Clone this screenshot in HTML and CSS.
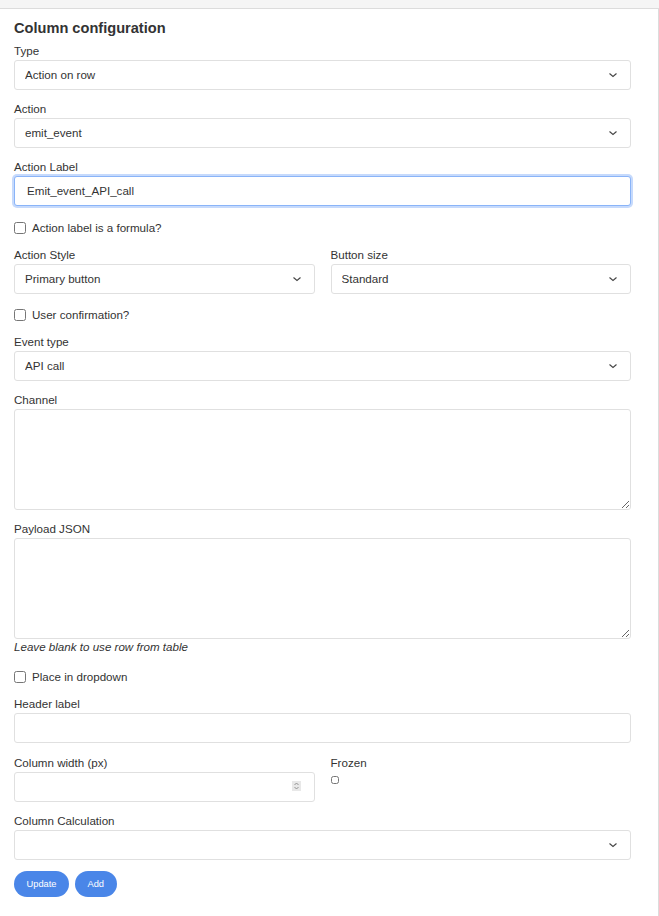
FILE: index.html
```html
<!DOCTYPE html>
<html lang="en">
<head>
   <meta charset="UTF-8">
   <meta name="viewport" content="width=device-width, initial-scale=1.0">
   <title>Column configuration</title>
   <link rel="stylesheet" href="styles.css">
</head>
<body>
   <div class="topbar"></div>
   <div class="panel">
      <h1>Column configuration</h1>

      <div class="field">
         <label>Type</label>
         <div class="select">
            <select><option>Action on row</option></select>
            <svg class="chev" width="10" height="6" viewBox="0 0 10 6"><path d="M1.5 1.5 L5 4.5 L8.5 1.5" /></svg>
         </div>
      </div>

      <div class="field">
         <label>Action</label>
         <div class="select">
            <select><option>emit_event</option></select>
            <svg class="chev" width="10" height="6" viewBox="0 0 10 6"><path d="M1.5 1.5 L5 4.5 L8.5 1.5" /></svg>
         </div>
      </div>

      <div class="field">
         <label>Action Label</label>
         <input class="text focused" type="text" value="Emit_event_API_call">
      </div>

      <div class="check">
         <input type="checkbox"><span>Action label is a formula?</span>
      </div>

      <div class="row">
         <div>
            <label>Action Style</label>
            <div class="select">
               <select><option>Primary button</option></select>
               <svg class="chev" width="10" height="6" viewBox="0 0 10 6"><path d="M1.5 1.5 L5 4.5 L8.5 1.5" /></svg>
            </div>
         </div>
         <div>
            <label>Button size</label>
            <div class="select">
               <select><option>Standard</option></select>
               <svg class="chev" width="10" height="6" viewBox="0 0 10 6"><path d="M1.5 1.5 L5 4.5 L8.5 1.5" /></svg>
            </div>
         </div>
      </div>

      <div class="check">
         <input type="checkbox"><span>User confirmation?</span>
      </div>

      <div class="field">
         <label>Event type</label>
         <div class="select">
            <select><option>API call</option></select>
            <svg class="chev" width="10" height="6" viewBox="0 0 10 6"><path d="M1.5 1.5 L5 4.5 L8.5 1.5" /></svg>
         </div>
      </div>

      <div class="field">
         <label>Channel</label>
         <textarea></textarea>
      </div>

      <div class="field tight">
         <label>Payload JSON</label>
         <textarea></textarea>
         <div class="help">Leave blank to use row from table</div>
      </div>

      <div class="check">
         <input type="checkbox"><span>Place in dropdown</span>
      </div>

      <div class="field wide">
         <label>Header label</label>
         <input class="text" type="text">
      </div>

      <div class="row last">
         <div>
            <label>Column width (px)</label>
            <div class="number">
               <input class="text" type="text">
               <span class="spin">
                  <svg width="9" height="10" viewBox="0 0 9 10"><path d="M2.5 4 L4.5 2 L6.5 4 M2.5 6 L4.5 8 L6.5 6" /></svg>
               </span>
            </div>
         </div>
         <div>
            <label>Frozen</label>
            <input class="small-check" type="checkbox">
         </div>
      </div>

      <div class="field">
         <label>Column Calculation</label>
         <div class="select">
            <select><option></option></select>
            <svg class="chev" width="10" height="6" viewBox="0 0 10 6"><path d="M1.5 1.5 L5 4.5 L8.5 1.5" /></svg>
         </div>
      </div>

      <div class="buttons">
         <button class="btn">Update</button>
         <button class="btn">Add</button>
      </div>
   </div>
</body>
</html>
```

FILE: styles.css
```css
*{
   margin: 0;
   padding: 0;
   box-sizing: border-box;
}

body{
   font-family: "Liberation Sans", Arial, sans-serif;
   color: #333;
   background: #fff;
}

.topbar{
   height: 9px;
   background: #f5f5f5;
   border-bottom: 1px solid #dcdcdc;
}

.panel{
   width: 659px;
   min-height: 907px;
   padding: 10px 27px 0 14px;
   border-right: 1px solid #dcdcdc;
}

h1{
   font-size: 14.6px;
   line-height: 18px;
   font-weight: bold;
   color: #333;
   margin-bottom: 8px;
}

label{
   display: block;
   font-size: 11.6px;
   line-height: 12px;
   padding-bottom: 3px;
   color: #333;
}

.field{
   margin-bottom: 13px;
}

.field.wide{
   margin-bottom: 14px;
}

.row{
   display: grid;
   grid-template-columns: 1fr 1fr;
   gap: 16px;
   margin-bottom: 12px;
}

.row.last{
   margin-bottom: 13px;
}

.select, .number{
   position: relative;
}

select, .text{
   display: block;
   width: 100%;
   height: 30px;
   border: 1px solid #e0e0e0;
   border-radius: 3px;
   background: #fff;
   font-family: inherit;
   font-size: 11.6px;
   color: #333;
   outline: none;
}

select{
   appearance: none;
   -webkit-appearance: none;
   padding: 0 24px 1px 10px;
}

.text{
   padding: 0 12px 1px;
}

.text.focused{
   border-color: #8ab4f8;
   box-shadow: 0 0 0 2px #c6dafc;
}

.chev{
   position: absolute;
   right: 13px;
   top: 12px;
   fill: none;
   stroke: #444;
   stroke-width: 1.1;
}

.spin{
   position: absolute;
   right: 14px;
   top: 9px;
   width: 9px;
   height: 10px;
   background: #e8e8e8;
}

.spin svg{
   display: block;
   fill: none;
   stroke: #888;
   stroke-width: 0.9;
}

textarea{
   display: block;
   width: 100%;
   height: 101px;
   border: 1px solid #e0e0e0;
   border-radius: 3px;
   font-family: inherit;
   font-size: 11.6px;
   resize: vertical;
   outline: none;
}

.help{
   font-size: 11.6px;
   line-height: 15px;
   font-style: italic;
   color: #333;
   margin-bottom: 14px;
}

.check{
   display: flex;
   align-items: center;
   height: 17px;
   margin-bottom: 13px;
   font-size: 11.6px;
   color: #333;
}

.check input{
   width: 12px;
   height: 12px;
   margin: 0 6px 0 0;
}

.small-check{
   display: block;
   width: 8px;
   height: 8px;
   margin: 4px 0 0 0;
}

.buttons{
   display: flex;
   gap: 6px;
   margin-top: -2px;
}

.btn{
   height: 26px;
   padding: 0 12.5px;
   border: none;
   border-radius: 13px;
   background: #4a86e8;
   color: #fff;
   font-family: inherit;
   font-size: 9.3px;
}
```
